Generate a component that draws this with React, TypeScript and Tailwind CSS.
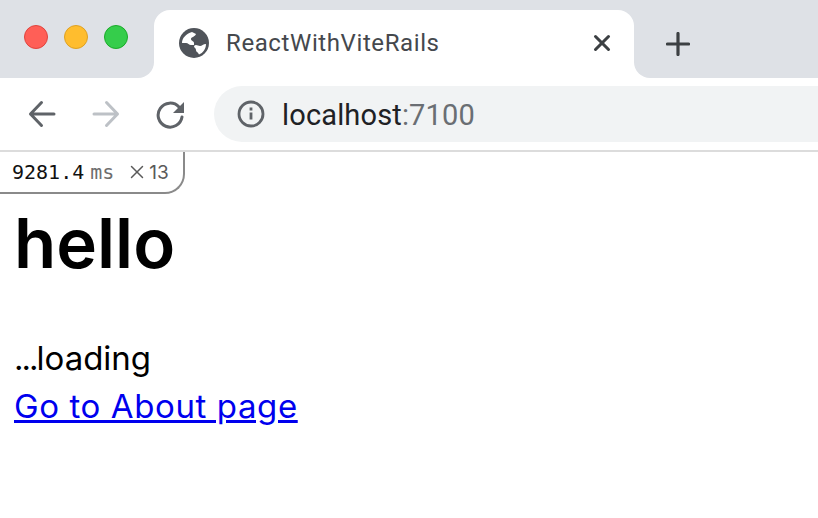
import { X } from 'lucide-react'

function TrafficLight({ className }: { className: string }) {
  return <span className={`h-6 w-6 rounded-full border ${className}`} />
}

function GlobeIcon() {
  return (
    <svg width="30" height="30" viewBox="0 0 30 30">
      <circle cx="15" cy="15" r="15" fill="#50545a" />
      <path d="M3 15C3 10 7 6 13 4l4 2c-1 3-5 3-5 5 0 2 3 2 3 4v2h-3c-2 0-3-2-5-2z" fill="#fff" />
      <path d="M27 16c0 5-3 9-7 10.500-1-2.500-3-2.500-3-4.500s-2-2-2-4c2-2 4 0 6 0s3-2 6-2z" fill="#fff" />
    </svg>
  )
}

export default function App() {
  return (
    <div className="flex h-[518px] w-[818px] flex-col overflow-hidden bg-white font-['Liberation_Sans',sans-serif]">
      <div className="flex h-[78px]">
        <div className="flex w-[154px] items-start gap-4 rounded-br-[16px] bg-[#dee1e6] pl-6 pt-[25px]">
          <TrafficLight className="border-[#e0443e] bg-[#ff5f57]" />
          <TrafficLight className="border-[#dea123] bg-[#ffbd2e]" />
          <TrafficLight className="border-[#1aab29] bg-[#35cd4b]" />
        </div>
        <div className="bg-[#dee1e6] pt-[10px]">
          <div className="flex h-[68px] w-[480px] items-center rounded-t-[16px] bg-white pb-[2px] pl-[25px] pr-[19px]">
            <GlobeIcon />
            <span className="ml-[17px] flex-1 font-['Roboto',sans-serif] text-[24px] tracking-[0.6px] text-[#45484d]">ReactWithViteRails</span>
            <X className="h-[26px] w-[26px] text-[#3c4043]" strokeWidth={2.8} />
          </div>
        </div>
        <div className="flex flex-1 items-start rounded-bl-[16px] bg-[#dee1e6] pl-[32px] pt-[32px]">
          <svg width="24" height="24" viewBox="0 0 24 24" fill="none" stroke="#3c4043" strokeWidth="3.200" strokeLinecap="round">
            <path d="M12 1.500v21M1.500 12h21" />
          </svg>
        </div>
      </div>

      <div className="flex h-[72px] items-center pl-[26px]">
        <svg width="32" height="32" viewBox="0 0 32 32" fill="none" stroke="#5f6368" strokeWidth="3" strokeLinecap="round" strokeLinejoin="round">
          <path d="M4.500 16H28M15.500 4.500 4.500 16l11 11.500" />
        </svg>
        <svg className="ml-[32px]" width="32" height="32" viewBox="0 0 32 32" fill="none" stroke="#bdc1c6" strokeWidth="3" strokeLinecap="round" strokeLinejoin="round">
          <path d="M4 16h23.500M16.500 4.500 27.500 16l-11 11.500" />
        </svg>
        <svg className="ml-[32px]" width="32" height="32" viewBox="0 0 32 32" fill="none">
          <path d="M25 9A12 12 0 1 0 28 19" stroke="#5f6368" strokeWidth="3" strokeLinecap="round" />
          <path d="M30 4v11H19z" fill="#5f6368" />
        </svg>
        <div className="ml-[28px] flex h-[56px] flex-1 items-center rounded-l-[28px] bg-[#f1f3f4] pl-[23px]">
          <svg width="28" height="28" viewBox="0 0 28 28" fill="none">
            <circle cx="14" cy="14" r="12" stroke="#5f6368" strokeWidth="2.800" />
            <path d="M14 12.500v7" stroke="#5f6368" strokeWidth="2.800" />
            <path d="M14 7.500v3" stroke="#5f6368" strokeWidth="2.800" />
          </svg>
          <span className="ml-[17px] pt-[2px] font-['Roboto',sans-serif] text-[29px] leading-none tracking-[0.15px]">
            <span className="text-[#202124]">localhost</span>
            <span className="text-[#6a6e73]">:7100</span>
          </span>
        </div>
      </div>

      <div className="h-[2px] bg-[#dcdcdc]" />

      <div className="flex h-[42px] w-[185px] items-center rounded-br-[20px] border-b-2 border-r-2 border-[#8a8a8a] pl-3 font-['DejaVu_Sans_Mono',monospace]">
        <span className="text-[20px] leading-none text-[#111111]">9281.4</span>
        <span className="ml-[6px] text-[20px] leading-none text-[#6e6e6e]">ms</span>
        <X className="ml-[12px] h-[22px] w-[22px] text-[#5a5a5a]" strokeWidth={1.6} />
        <span className="ml-[1px] font-['Inter',sans-serif] text-[19px] leading-none text-[#5a5a5a]">13</span>
      </div>

      <div className="px-[14px] font-['Inter',sans-serif] text-black">
        <h1 className="mt-[5px] text-[69px] font-semibold leading-[88px]">hello</h1>
        <p className="mt-[47px] text-[33px] leading-[48px]">
          <span className="tracking-[-2px]">...</span>loading
        </p>
        <a href="#" className="block text-[33px] leading-[48px] tracking-[0.6px] text-[#0000ee] underline">Go to About page</a>
      </div>
    </div>
  )
}
